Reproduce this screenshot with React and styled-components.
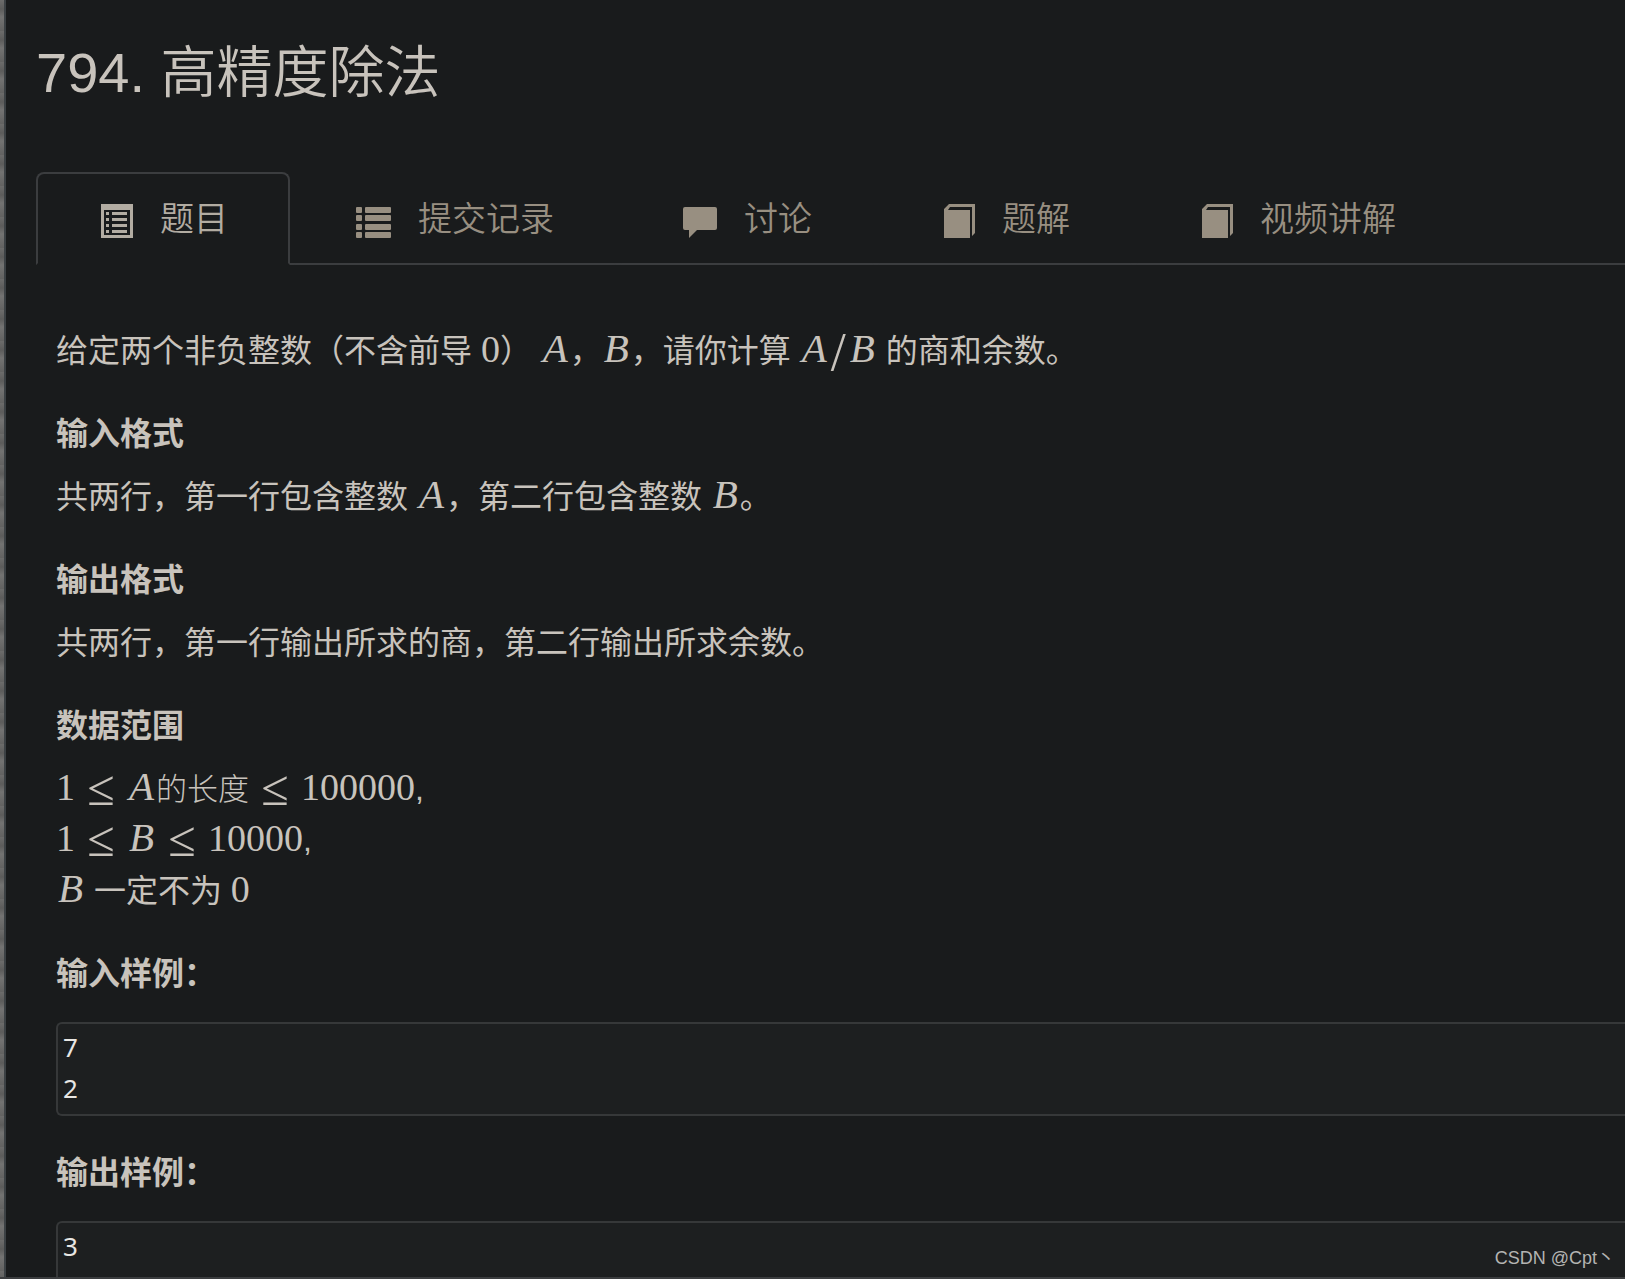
import React from "react";
import styled, { createGlobalStyle } from "styled-components";

const tabs = [
  { id: "problem", label: "题目", icon: "listAlt" },
  { id: "submissions", label: "提交记录", icon: "list" },
  { id: "discussion", label: "讨论", icon: "comment" },
  { id: "solutions", label: "题解", icon: "book" },
  { id: "videos", label: "视频讲解", icon: "book" },
];

const icons = {
  listAlt: (
    <>
      <path fillRule="evenodd" d="M3 0H35V34H3ZM6 6V31H32V6Z" />
      <path d="M8 8h3v3H8zM14 8h15v3H14zM8 14h3v3H8zM14 14h15v3H14zM8 20h3v3H8zM14 20h15v3H14zM8 26h3v3H8zM14 26h15v3H14z" />
    </>
  ),
  list: [3, 11, 20, 28].map((y) => (
    <React.Fragment key={y}>
      <rect x="0" y={y} width="6" height="6" rx="1" />
      <rect x="9" y={y} width="26" height="6" rx="1" />
    </React.Fragment>
  )),
  comment: (
    <path d="M3 3H33Q35 3 35 5V24Q35 26 33 26H15L7 34V26H3Q1 26 1 24V5Q1 3 3 3Z" />
  ),
  book: <path d="M4 34V5L9 0H35V29L32 32V3H10L8 6H30V34Z" />,
};

const App = () => {
  const [current, setCurrent] = React.useState("problem");

  return (
    <Page lang="zh-CN">
      <GlobalStyle />
      <Panel>
        <Title>794. 高精度除法</Title>
        <Tabs>
          {tabs.map((tab) => (
            <Tab
              key={tab.id}
              href={`#${tab.id}`}
              $active={tab.id === current}
              aria-current={tab.id === current ? "page" : undefined}
              onClick={() => setCurrent(tab.id)}
            >
              <Icon viewBox="0 0 36 34" aria-hidden="true">
                {icons[tab.icon]}
              </Icon>
              {tab.label}
            </Tab>
          ))}
        </Tabs>
        <Content>
          <P>
            给定两个非负整数（不含前导 <Num>0</Num>） <Var>A</Var>，<Var>B</Var>
            ，请你计算 <Var>A</Var>
            <Slash>/</Slash>
            <Var>B</Var> 的商和余数。
          </P>

          <H4>输入格式</H4>
          <P>
            共两行，第一行包含整数 <Var>A</Var>，第二行包含整数 <Var>B</Var>。
          </P>

          <H4>输出格式</H4>
          <P>共两行，第一行输出所求的商，第二行输出所求余数。</P>

          <H4>数据范围</H4>
          <P>
            <Num>1</Num>
            <Rel>≤</Rel>
            <Var>A</Var>
            <MathText>的长度</MathText>
            <Rel>≤</Rel>
            <Num>100000</Num>,
            <br />
            <Num>1</Num>
            <Rel>≤</Rel>
            <Var>B</Var>
            <Rel>≤</Rel>
            <Num>10000</Num>,
            <br />
            <Var>B</Var> 一定不为 <Num>0</Num>
          </P>

          <H4>输入样例：</H4>
          <Pre>{"7\n2"}</Pre>

          <H4>输出样例：</H4>
          <Pre>3</Pre>
        </Content>
      </Panel>
      <Watermark>CSDN @Cpt丶</Watermark>
    </Page>
  );
};

export default App;

const GlobalStyle = createGlobalStyle`
  * {
    box-sizing: border-box;
  }

  body {
    margin: 0;
    background-color: #181a1b;
    color: #c8c3bc;
    font-family: "Liberation Sans", "Noto Sans CJK SC", sans-serif;
  }
`;

const Page = styled.div`
  position: relative;
  height: 100vh;
  overflow: hidden;
  padding-left: 4px;
  background: repeating-linear-gradient(
    #6c6c6b 0px,
    #5c5c5b 9px,
    #737372 17px,
    #626261 31px
  );
  border-bottom: 2px solid #3b3d3f;
`;

const Panel = styled.main`
  min-height: 100%;
  padding: 41px 0px 0px 30px;
  background-color: #191b1c;
  border-left: 2px solid #3c4144;
`;

const Title = styled.h1`
  margin: 0px 0px 67px;
  font-size: 56px;
  font-weight: 350;
  line-height: 64px;
`;

const Tabs = styled.nav`
  display: flex;
  gap: 4px;
  border-bottom: 2px solid #3b3d3f;
`;

const Tab = styled.a`
  display: flex;
  align-items: center;
  gap: 26px;
  margin-bottom: -2px;
  padding: 21px 60px 19px;
  border: 2px solid ${(props) => (props.$active ? "#3b3d3f" : "transparent")};
  border-bottom-color: ${(props) => (props.$active ? "#191b1c" : "#3b3d3f")};
  border-radius: ${(props) => (props.$active ? "8px 8px 0px 0px" : "0px")};
  color: ${(props) => (props.$active ? "#b2aca2" : "#988f81")};
  font-size: 34px;
  font-weight: 350;
  line-height: 49px;
  text-decoration: none;
  white-space: nowrap;
`;

const Icon = styled.svg`
  flex: none;
  width: 36px;
  height: 34px;
  margin-top: 2px;
  fill: currentColor;
`;

const Content = styled.article`
  padding: 61px 0px 0px 20px;
`;

const P = styled.p`
  margin: 0px;
  font-size: 32px;
  line-height: 51px;
`;

const H4 = styled.h4`
  margin: 40px 0px 20px;
  font-size: 32px;
  font-weight: 700;
  line-height: 35px;
`;

const Num = styled.span`
  font-family: "Liberation Serif", serif;
  font-size: 38px;
  line-height: 1;
`;

const Var = styled.i`
  display: inline-block;
  width: 29px;
  font-family: "Liberation Serif", serif;
  font-size: 41px;
  line-height: 38px;
  text-align: center;
`;

const Slash = styled.span`
  display: inline-block;
  width: 19px;
  font-family: "Liberation Serif", serif;
  font-size: 54px;
  line-height: 38px;
  text-align: center;
  vertical-align: -8px;
`;

const Rel = styled.span`
  display: inline-block;
  width: 30px;
  margin: 0px 11px;
  font-family: "Liberation Serif", serif;
  font-size: 50px;
  line-height: 30px;
  text-align: center;
  vertical-align: -5px;
`;

const MathText = styled.span`
  font-size: 31px;
  font-weight: 300;
`;

const Pre = styled.pre`
  min-height: 94px;
  margin: 30px 0px 0px;
  padding: 3px 5px;
  background-color: #1d1f20;
  border: 2px solid #363839;
  border-right: none;
  border-radius: 6px 0px 0px 6px;
  color: #e8e6e3;
  font-family: "Noto Sans", sans-serif;
  font-size: 26px;
  line-height: 41px;
`;

const Watermark = styled.div`
  position: absolute;
  right: 10px;
  bottom: 8px;
  color: #b4b4b2;
  font-size: 18px;
  line-height: 22px;
`;
